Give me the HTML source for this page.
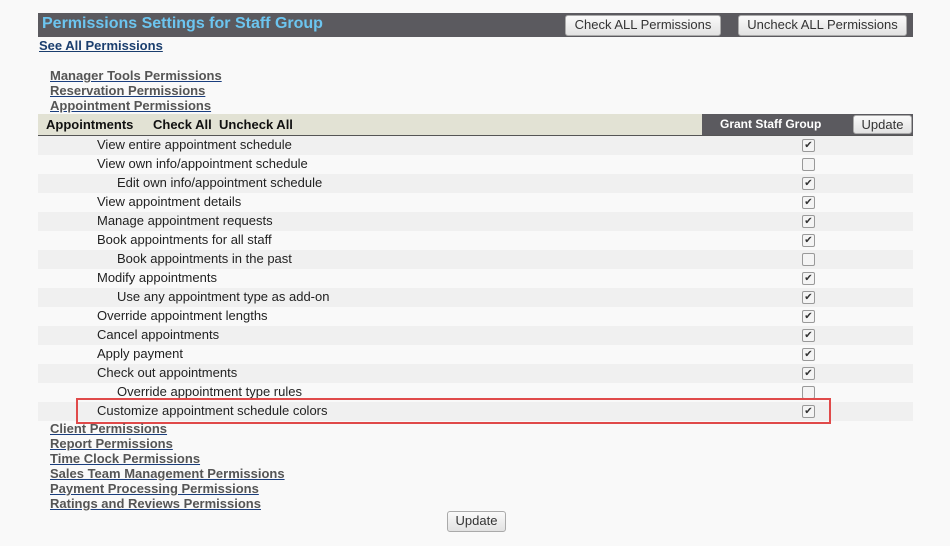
<!DOCTYPE html>
<html><head><meta charset="utf-8"><style>
body{margin:0;background:#f9f9f9;font-family:"Liberation Sans",Arial,sans-serif;width:950px;height:546px;position:relative;overflow:hidden}
.a{position:absolute}
.bar{left:38px;top:13px;width:875px;height:24px;background:#5b5a5f}
.title{left:42px;top:15px;color:#6cc5f0;font-weight:bold;font-size:16px}
.btn{position:absolute;background:linear-gradient(#fafafa,#e2e2e2);border:1px solid #aaa;border-radius:3px;font-size:13px;color:#333;text-align:center;box-sizing:border-box;line-height:18px}
.lk{position:absolute;left:50px;font-size:13px;font-weight:bold;color:#555;text-decoration:underline;text-decoration-color:#1a3e7e}
.row{position:absolute;left:38px;width:875px;height:19px;font-size:13px;color:#222;line-height:17px}
.row.s{background:#f0f0f0}
.row span{position:absolute}
.cb{position:absolute;left:764px;top:3px;width:11px;height:11px;border:1px solid #999;border-radius:2px;background:#f4f4f4;font-size:10px;line-height:11px;text-align:center;color:#333}
</style></head><body>
<div class="a bar"></div>
<div class="a title">Permissions Settings for Staff Group</div>
<div class="btn" style="left:565px;top:15px;width:156px;height:21px">Check ALL Permissions</div>
<div class="btn" style="left:738px;top:15px;width:169px;height:21px">Uncheck ALL Permissions</div>
<div class="a" style="left:39px;top:38px;font-size:13px;font-weight:bold;color:#1a3e6e;text-decoration:underline">See All Permissions</div>
<div class="lk" style="top:68px">Manager Tools Permissions</div>
<div class="lk" style="top:83px">Reservation Permissions</div>
<div class="lk" style="top:98px">Appointment Permissions</div>
<div class="a" style="left:38px;top:114px;width:664px;height:21px;background:#e2e2d4;border-bottom:1px solid #555"></div>
<div class="a" style="left:702px;top:114px;width:211px;height:21px;background:#5b5a5f;border-bottom:1px solid #555"></div>
<div class="a" style="left:46px;top:117px;font-size:13px;font-weight:bold;color:#111">Appointments</div>
<div class="a" style="left:153px;top:117px;font-size:13px;font-weight:bold;color:#111">Check All&nbsp; Uncheck All</div>
<div class="a" style="left:720px;top:117px;font-size:12px;font-weight:bold;color:#fff">Grant Staff Group</div>
<div class="btn" style="left:853px;top:115px;width:59px;height:19px;line-height:17px">Update</div>

<div class="row s" style="top:136px"><span style="left:59px">View entire appointment schedule</span><div class="cb">✔</div></div>
<div class="row" style="top:155px"><span style="left:59px">View own info/appointment schedule</span><div class="cb"></div></div>
<div class="row s" style="top:174px"><span style="left:79px">Edit own info/appointment schedule</span><div class="cb">✔</div></div>
<div class="row" style="top:193px"><span style="left:59px">View appointment details</span><div class="cb">✔</div></div>
<div class="row s" style="top:212px"><span style="left:59px">Manage appointment requests</span><div class="cb">✔</div></div>
<div class="row" style="top:231px"><span style="left:59px">Book appointments for all staff</span><div class="cb">✔</div></div>
<div class="row s" style="top:250px"><span style="left:79px">Book appointments in the past</span><div class="cb"></div></div>
<div class="row" style="top:269px"><span style="left:59px">Modify appointments</span><div class="cb">✔</div></div>
<div class="row s" style="top:288px"><span style="left:79px">Use any appointment type as add-on</span><div class="cb">✔</div></div>
<div class="row" style="top:307px"><span style="left:59px">Override appointment lengths</span><div class="cb">✔</div></div>
<div class="row s" style="top:326px"><span style="left:59px">Cancel appointments</span><div class="cb">✔</div></div>
<div class="row" style="top:345px"><span style="left:59px">Apply payment</span><div class="cb">✔</div></div>
<div class="row s" style="top:364px"><span style="left:59px">Check out appointments</span><div class="cb">✔</div></div>
<div class="row" style="top:383px"><span style="left:79px">Override appointment type rules</span><div class="cb"></div></div>
<div class="row s" style="top:402px"><span style="left:59px">Customize appointment schedule colors</span><div class="cb">✔</div></div>
<div class="a" style="left:76px;top:398px;width:751px;height:22px;border:2px solid #e04a4a"></div>

<div class="lk" style="top:421px">Client Permissions</div>
<div class="lk" style="top:436px">Report Permissions</div>
<div class="lk" style="top:451px">Time Clock Permissions</div>
<div class="lk" style="top:466px">Sales Team Management Permissions</div>
<div class="lk" style="top:481px">Payment Processing Permissions</div>
<div class="lk" style="top:496px">Ratings and Reviews Permissions</div>
<div class="btn" style="left:447px;top:511px;width:59px;height:21px">Update</div>
</body></html>
